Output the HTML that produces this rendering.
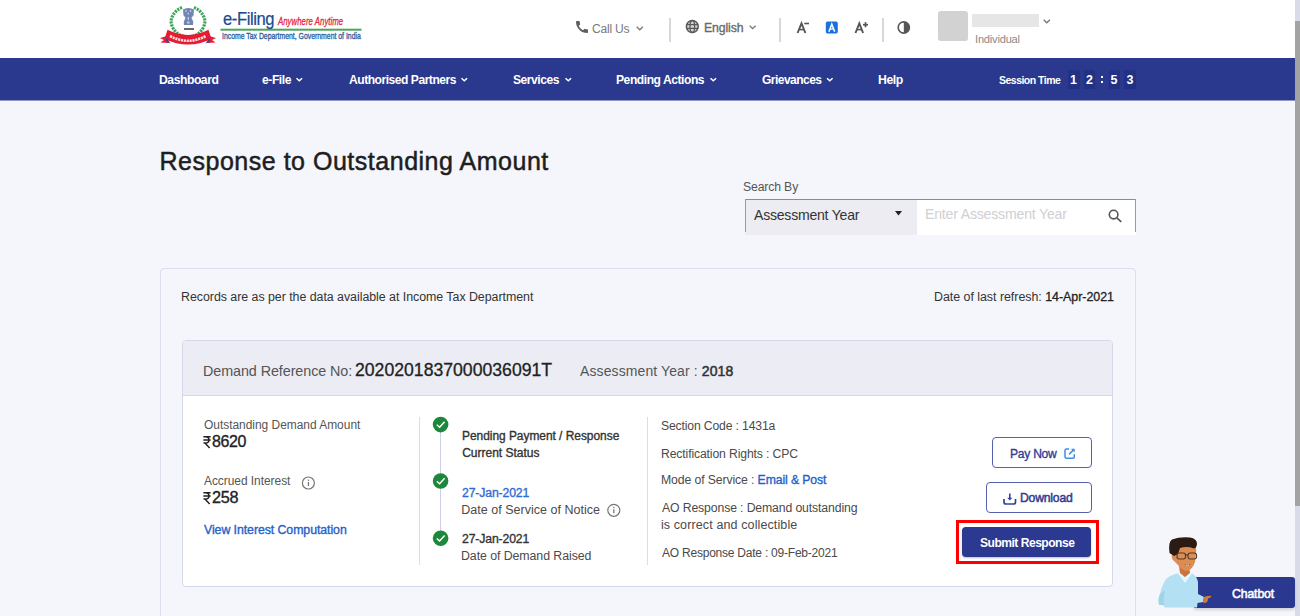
<!DOCTYPE html>
<html><head><meta charset="utf-8">
<style>
html,body{margin:0;padding:0;}
body{width:1300px;height:616px;overflow:hidden;position:relative;background:#f5f6fb;font-family:"Liberation Sans",sans-serif;}
.a{position:absolute;box-sizing:border-box;}
.t{position:absolute;white-space:nowrap;line-height:1;font-family:"Liberation Sans",sans-serif;}
svg{position:absolute;overflow:visible;}
</style></head><body>
<!-- header -->
<div class="a" style="left:0;top:0;width:1295px;height:58px;background:#fff;"></div>
<!-- navbar -->
<div class="a" style="left:0;top:58px;width:1295px;height:42px;background:#2a398d;"></div>
<div class="a" style="left:0;top:100px;width:1295px;height:1px;background:#8f97c4;"></div>
<!-- scrollbar -->
<div class="a" style="left:1295px;top:0;width:5px;height:616px;background:#dadbe9;"></div>
<div class="a" style="left:1295px;top:21px;width:5px;height:485px;background:#a3a3a3;"></div>

<!-- logo emblem -->
<svg style="left:0;top:0" width="1" height="1">
 <g fill="none" stroke="#3da35a" stroke-width="3.2" stroke-dasharray="2.2 0.9">
  <path d="M182 7.5 A17 17 0 0 0 171 21 A17 17 0 0 0 188 37"/>
  <path d="M194 7.5 A17 17 0 0 1 205 21 A17 17 0 0 1 188 37"/>
 </g>
 <g fill="#7185b3">
  <path d="M183 9.5 Q188 6.5 194 9.5 L193.5 15.5 Q191.5 17 191.5 18 L192.5 20 Q194 22 193 25 L184 25 Q183 22 184.5 20 L185.5 18 Q185.5 17 183.5 15.5 Z"/>
 </g>
 <g fill="#fff" opacity="0.55">
  <circle cx="186" cy="11" r="0.9"/><circle cx="190.5" cy="11" r="0.9"/><circle cx="188.3" cy="13.5" r="0.9"/>
  <rect x="187.6" y="17" width="1.4" height="3"/>
  <circle cx="188.3" cy="22.5" r="1.3"/>
 </g>
 <rect x="184" y="28" width="10" height="2" fill="#444" opacity="0.8"/>
 <path d="M167.5 29.8 Q188 40 208.5 29.8 L211.5 39 Q188 50 164.5 39 Z" fill="#e51d33"/>
 <path d="M167 36 L160 38 L164 40 L160.5 42.5 L169 43 Z" fill="#e51d33"/>
 <path d="M209 36 L216 38 L212 40 L215.5 42.5 L207 43 Z" fill="#e51d33"/>
 <path d="M166 37.5 L170.5 43.5 L166.5 42 Z" fill="#2c4a9a"/>
 <path d="M210 37.5 L205.5 43.5 L209.5 42 Z" fill="#2c4a9a"/>
 <path d="M170 36 Q188 45.5 206 36" fill="none" stroke="#fff" stroke-width="2.6" stroke-dasharray="2.2 0.7" opacity="0.85"/>
 <rect x="220.5" y="28.7" width="141" height="2" fill="#4da45a"/>
</svg>

<!-- call us -->
<svg style="left:573.5px;top:19px" width="16" height="16" viewBox="0 0 24 24"><path fill="#5e5e5e" d="M20.01 15.38c-1.23 0-2.42-.2-3.53-.56-.35-.12-.74-.03-1.01.24l-1.57 1.97c-2.83-1.35-5.48-3.9-6.89-6.83l1.95-1.66c.27-.28.35-.67.24-1.02-.37-1.11-.56-2.3-.56-3.53 0-.54-.45-.99-.99-.99H4.19C3.65 3 3 3.24 3 3.99 3 13.28 10.73 21 20.01 21c.71 0 .99-.63.99-1.18v-3.45c0-.54-.45-.99-.99-.99z"/></svg>
<svg style="left:636px;top:26px" width="8" height="5"><polyline points="0.7,0.7 3.8,3.8 6.9,0.7" fill="none" stroke="#777" stroke-width="1.3"/></svg>
<div class="a" style="left:669px;top:18px;width:2px;height:24px;background:#d7d7d7;"></div>
<!-- globe -->
<svg style="left:0;top:0" width="1" height="1">
 <g fill="none" stroke="#5a5a5a">
  <circle cx="692.3" cy="26.5" r="5.9" stroke-width="1.5"/>
  <ellipse cx="692.3" cy="26.5" rx="2.3" ry="6" stroke-width="1.3"/>
  <line x1="686.5" y1="24.6" x2="698.1" y2="24.6" stroke-width="1.3"/>
  <line x1="686.5" y1="28.4" x2="698.1" y2="28.4" stroke-width="1.3"/>
 </g>
 <circle cx="692.3" cy="26.5" r="6.6" fill="#5a5a5a" opacity="0.25"/>
</svg>
<svg style="left:749px;top:24.5px" width="8" height="5"><polyline points="0.7,0.7 3.6,3.6 6.6,0.7" fill="none" stroke="#777" stroke-width="1.3"/></svg>
<div class="a" style="left:779px;top:18px;width:2px;height:24px;background:#d7d7d7;"></div>
<!-- A- A A+ -->
<svg style="left:0;top:0" width="1" height="1">
 <g fill="none" stroke="#555" stroke-width="1.9" stroke-linejoin="miter">
  <path d="M797.6 33 L801.5 23.3 L805.4 33"/>
  <line x1="799.2" y1="29.6" x2="803.8" y2="29.6" stroke-width="1.5"/>
  <line x1="804.3" y1="23.5" x2="809" y2="23.5" stroke-width="1.6"/>
  <path d="M855.5 33 L859.3 23.3 L863.1 33"/>
  <line x1="857" y1="29.6" x2="861.6" y2="29.6" stroke-width="1.5"/>
  <line x1="863" y1="24.7" x2="868" y2="24.7" stroke-width="1.7"/>
  <line x1="865.5" y1="22.2" x2="865.5" y2="27.2" stroke-width="1.7"/>
 </g>
 <rect x="825.8" y="21.6" width="12" height="12" rx="1.8" fill="#1a70de"/>
 <g fill="none" stroke="#fff" stroke-width="1.5">
  <path d="M828.9 31.8 L831.8 24.2 L834.7 31.8"/>
  <line x1="830" y1="29" x2="833.6" y2="29" stroke-width="1.2"/>
 </g>
</svg>
<div class="a" style="left:882px;top:18px;width:2px;height:24px;background:#d7d7d7;"></div>
<svg style="left:897px;top:21px" width="14" height="14" viewBox="0 0 14 14">
 <circle cx="6.8" cy="6.5" r="5.6" fill="none" stroke="#555" stroke-width="1.6"/>
 <path d="M6.8 0.9 A5.6 5.6 0 0 1 6.8 12.1 Z" fill="#555"/>
</svg>
<div class="a" style="left:937.5px;top:11.2px;width:30.3px;height:30.3px;background:#d2d2d2;border-radius:3px;"></div>
<div class="a" style="left:972.2px;top:14px;width:67px;height:12.5px;background:#e6e6e6;"></div>
<svg style="left:1043px;top:18.5px" width="8" height="5"><polyline points="0.7,0.7 3.8,3.8 6.9,0.7" fill="none" stroke="#777" stroke-width="1.3"/></svg>

<!-- nav chevrons -->
<svg style="left:0;top:0" width="1" height="1">
 <g fill="none" stroke="#fff" stroke-width="1.5">
  <polyline points="296.5,78.2 299.3,80.8 302.1,78.2"/>
  <polyline points="461.5,78.2 464.3,80.8 467.1,78.2"/>
  <polyline points="565.5,78.2 568.3,80.8 571.1,78.2"/>
  <polyline points="710.5,78.2 713.3,80.8 716.1,78.2"/>
  <polyline points="827,78.2 829.8,80.8 832.6,78.2"/>
 </g>
</svg>
<!-- session timer boxes -->
<div class="a" style="left:1067.8px;top:69.6px;width:12px;height:19.2px;background:#233184;"></div>
<div class="a" style="left:1084.2px;top:69.6px;width:11px;height:19.2px;background:#233184;"></div>
<div class="a" style="left:1108.8px;top:69.6px;width:11px;height:19.2px;background:#233184;"></div>
<div class="a" style="left:1124.2px;top:69.6px;width:12.3px;height:19.2px;background:#233184;"></div>
<div class="t" style="left:1070px;top:73.5px;font-size:12.5px;font-weight:bold;color:#fff;">1</div>
<div class="t" style="left:1086px;top:73.5px;font-size:12.5px;font-weight:bold;color:#fff;">2</div>
<div class="a" style="left:1100.8px;top:75.5px;width:2.2px;height:2.2px;background:#fff;"></div>
<div class="a" style="left:1100.8px;top:81.3px;width:2.2px;height:2.2px;background:#fff;"></div>
<div class="t" style="left:1110.5px;top:73.5px;font-size:12.5px;font-weight:bold;color:#fff;">5</div>
<div class="t" style="left:1126.5px;top:73.5px;font-size:12.5px;font-weight:bold;color:#fff;">3</div>

<!-- search box -->
<div class="a" style="left:745px;top:199px;width:172px;height:36px;background:#ececf2;"></div>
<div class="a" style="left:917px;top:199px;width:219px;height:36px;background:#fff;"></div>
<div class="a" style="left:745px;top:199px;width:391px;height:1px;background:#8c8c8c;"></div>
<div class="a" style="left:745px;top:199px;width:1px;height:33px;background:#9a9a9a;"></div>
<div class="a" style="left:1135px;top:199px;width:1px;height:33px;background:#9a9a9a;"></div>
<svg style="left:894.5px;top:211px" width="7" height="5"><path d="M0 0 L7 0 L3.5 4.5 Z" fill="#222"/></svg>
<svg style="left:1108px;top:209px" width="15" height="14" viewBox="0 0 15 14">
 <circle cx="5.6" cy="5.6" r="4.3" fill="none" stroke="#555" stroke-width="1.6"/>
 <line x1="8.8" y1="8.8" x2="13.3" y2="12.8" stroke="#555" stroke-width="1.7"/>
</svg>

<!-- outer card -->
<div class="a" style="left:160px;top:268px;width:976px;height:400px;border:1px solid #dcdded;border-radius:4px;background:#f5f6fb;"></div>
<!-- demand box -->
<div class="a" style="left:182px;top:340px;width:931px;height:247px;border:1px solid #d6d7ea;border-radius:4px;background:#fff;overflow:hidden;">
  <div class="a" style="left:0;top:0;width:100%;height:55px;background:#ebecf4;border-bottom:1px solid #d6d7ea;"></div>
</div>
<!-- dividers -->
<div class="a" style="left:419px;top:417px;width:1px;height:148px;background:#dcdcee;"></div>
<div class="a" style="left:647px;top:417px;width:1px;height:148px;background:#dcdcee;"></div>
<!-- timeline -->
<div class="a" style="left:440px;top:430px;width:1px;height:104px;background:#cfcfea;"></div>
<svg style="left:0;top:0" width="1" height="1">
 <g>
  <circle cx="440.6" cy="424.6" r="7.8" fill="#1d873a"/>
  <polyline points="436.8,424.8 439.6,427.3 444.6,421.8" fill="none" stroke="#fff" stroke-width="1.5"/>
  <circle cx="440.6" cy="481" r="7.8" fill="#1d873a"/>
  <polyline points="436.8,481.2 439.6,483.7 444.6,478.2" fill="none" stroke="#fff" stroke-width="1.5"/>
  <circle cx="440.6" cy="538.3" r="7.8" fill="#1d873a"/>
  <polyline points="436.8,538.5 439.6,541 444.6,535.5" fill="none" stroke="#fff" stroke-width="1.5"/>
 </g>
 <g fill="none" stroke="#777" stroke-width="1.2">
  <circle cx="308.4" cy="483" r="6"/>
  <circle cx="613.8" cy="510.3" r="6"/>
 </g>
 <g fill="#777">
  <rect x="307.8" y="482" width="1.3" height="4"/>
  <rect x="307.8" y="479.6" width="1.3" height="1.3"/>
  <rect x="613.2" y="509.3" width="1.3" height="4"/>
  <rect x="613.2" y="506.9" width="1.3" height="1.3"/>
 </g>
</svg>
<!-- buttons -->
<div class="a" style="left:992.4px;top:437.3px;width:99.4px;height:31px;border:1.3px solid #5561aa;border-radius:4px;"></div>
<svg style="left:1064px;top:447.5px" width="12" height="11" viewBox="0 0 12 11">
 <path d="M5 1 H2.5 Q1 1 1 2.5 V8.8 Q1 10.3 2.5 10.3 H8.8 Q10.3 10.3 10.3 8.8 V6.3" fill="none" stroke="#3e8fe6" stroke-width="1.5"/>
 <path d="M7 0.8 H10.6 V4.4 Z" fill="#3e8fe6"/>
 <path d="M10 1.4 L5 6.4" fill="none" stroke="#3e8fe6" stroke-width="1.5"/>
</svg>
<div class="a" style="left:986.1px;top:482.3px;width:105.7px;height:30.7px;border:1.3px solid #5561aa;border-radius:4px;"></div>
<svg style="left:1002.5px;top:493px" width="14" height="12" viewBox="0 0 14 12">
 <path d="M1 6 V9 Q1 11 3 11 H10.5 Q12.5 11 12.5 9 V6" fill="none" stroke="#34429a" stroke-width="1.7"/>
 <path d="M6.8 0.5 V6" fill="none" stroke="#34429a" stroke-width="1.6"/>
 <path d="M4.2 4.8 L9.4 4.8 L6.8 7.6 Z" fill="#34429a"/>
</svg>
<div class="a" style="left:955.5px;top:519.8px;width:143.7px;height:44.7px;border:3px solid #ff0000;"></div>
<div class="a" style="left:961.8px;top:526.6px;width:129.7px;height:30.3px;background:#2b3990;border-radius:4px;box-shadow:0 1px 2px rgba(0,0,0,0.25);"></div>

<!-- chatbot -->
<div class="a" style="left:1194px;top:577px;width:101px;height:30.5px;background:#2a398f;border-radius:0 3px 3px 0;box-shadow:0 2px 3px rgba(0,0,0,0.15);"></div>
<svg style="left:0;top:0" width="1" height="1">
 <!-- body / shirt -->
 <path d="M1166 579 Q1172 574 1178 573.5 L1192 573.5 Q1197 576 1198 582 L1198 594 L1204 597 L1203 602 L1197.5 603 L1197 607.5 L1165 607.5 L1163 605 L1159 605 Q1157 600 1160 594 Q1162 585 1166 579 Z" fill="#b3e0f2"/>
 <path d="M1160 594 Q1158 600 1159.5 605 L1164 605 Q1163 598 1165 590 Z" fill="#9fd3ea"/>
 <path d="M1178 573.5 L1185 583 L1192 573.5 L1190 572 L1185 577 L1180 572 Z" fill="#e3f6fd"/>
 <path d="M1203.5 597.5 Q1206 595.5 1208 596 L1211.5 595.8 L1210.5 597.5 L1208 598.5 Q1208 602 1205.5 603 L1203 602.5 Z" fill="#cf7a3a"/>
 <!-- neck -->
 <path d="M1179 566 L1189 566 L1190 573 L1185 577 L1180 573 Z" fill="#c97340"/>
 <!-- face -->
 <path d="M1172 550 Q1171 545 1176 543 L1193 543 Q1197 546 1196 553 L1195 562 Q1193 569 1187 571 Q1181 570 1178 565 L1174 561 Q1171 559 1172 553 Z" fill="#dd8c52"/>
 <!-- hair -->
 <path d="M1169.5 553 Q1168 542 1172 539.5 Q1180 536.5 1190 537.5 Q1197 538.5 1197 544 Q1196.5 548 1194 548.5 Q1187 546 1180 548 L1178 554 L1174 556 Z" fill="#2c1b12"/>
 <!-- glasses -->
 <g fill="none" stroke="#4a3a33" stroke-width="1.1">
  <rect x="1177" y="553" width="8.5" height="6" rx="2.2"/>
  <rect x="1188" y="553" width="8.5" height="6" rx="2.2"/>
  <line x1="1185.5" y1="555" x2="1188" y2="555"/>
 </g>
 <path d="M1184.5 564.5 Q1187.3 567.5 1190 564.5 Z" fill="#3a2016"/>
 <rect x="1185.5" y="564.6" width="3.5" height="1" fill="#fff"/>
</svg>

<!-- rupee symbols -->
<svg style="left:203px;top:436px" width="8" height="12" viewBox="0 0 7.3 12">
 <path d="M0 0.7 H7.3 M0 3.9 H7.3 M0.2 6.9 H2.2 C4.6 6.9 5.6 5.5 5.6 3.9 C5.6 2.2 4.6 0.7 2.2 0.7 M1.6 7 L6.3 11.9" fill="none" stroke="#222" stroke-width="1.45"/>
</svg>
<svg style="left:203px;top:492px" width="8" height="12" viewBox="0 0 7.3 12">
 <path d="M0 0.7 H7.3 M0 3.9 H7.3 M0.2 6.9 H2.2 C4.6 6.9 5.6 5.5 5.6 3.9 C5.6 2.2 4.6 0.7 2.2 0.7 M1.6 7 L6.3 11.9" fill="none" stroke="#222" stroke-width="1.45"/>
</svg>

<div class="t" style="left:222.80px;top:10.50px;font-size:17.5px;letter-spacing:-0.425px;transform:scaleX(0.9478);transform-origin:0 0;color:#1a4a8f;-webkit-text-stroke:0.2px #1a4a8f;">e-Filing</div>
<div class="t" style="left:277.71px;top:15.80px;font-size:11px;letter-spacing:0.000px;transform:scaleX(0.7140);transform-origin:0 0;color:#e3283f;font-style:italic;-webkit-text-stroke:0.3px #e3283f;">Anywhere Anytime</div>
<div class="t" style="left:221.50px;top:31.10px;font-size:9.5px;letter-spacing:0.000px;transform:scaleX(0.7228);transform-origin:0 0;color:#2b5f9c;-webkit-text-stroke:0.35px #2b5f9c;">Income Tax Department, Government of India</div>
<div class="t" style="left:592.00px;top:23.30px;font-size:12.5px;letter-spacing:-0.238px;transform:scaleX(0.9644);transform-origin:0 0;color:#7a7a7a;">Call Us</div>
<div class="t" style="left:704.42px;top:22.40px;font-size:12.5px;letter-spacing:-0.126px;transform:scaleX(0.9811);transform-origin:0 0;color:#6a6a6a;-webkit-text-stroke:0.35px currentColor;">English</div>
<div class="t" style="left:975.04px;top:33.50px;font-size:11.5px;letter-spacing:-0.198px;transform:scaleX(0.9620);transform-origin:0 0;color:#8a8a8a;">Individual</div>
<div class="t" style="left:158.56px;top:73.00px;font-size:13px;letter-spacing:-0.509px;transform:scaleX(0.9382);transform-origin:0 0;color:#fff;font-weight:bold;">Dashboard</div>
<div class="t" style="left:261.50px;top:73.00px;font-size:13px;letter-spacing:-0.466px;transform:scaleX(0.9315);transform-origin:0 0;color:#fff;font-weight:bold;">e-File</div>
<div class="t" style="left:348.50px;top:73.00px;font-size:13px;letter-spacing:-0.504px;transform:scaleX(0.9274);transform-origin:0 0;color:#fff;font-weight:bold;">Authorised Partners</div>
<div class="t" style="left:513.30px;top:73.00px;font-size:13px;letter-spacing:-0.518px;transform:scaleX(0.9316);transform-origin:0 0;color:#fff;font-weight:bold;">Services</div>
<div class="t" style="left:615.87px;top:73.00px;font-size:13px;letter-spacing:-0.496px;transform:scaleX(0.9313);transform-origin:0 0;color:#fff;font-weight:bold;">Pending Actions</div>
<div class="t" style="left:761.80px;top:73.00px;font-size:13px;letter-spacing:-0.583px;transform:scaleX(0.9250);transform-origin:0 0;color:#fff;font-weight:bold;">Grievances</div>
<div class="t" style="left:878.26px;top:73.00px;font-size:13px;letter-spacing:-0.497px;transform:scaleX(0.9448);transform-origin:0 0;color:#fff;font-weight:bold;">Help</div>
<div class="t" style="left:999.20px;top:74.90px;font-size:11.5px;letter-spacing:-0.575px;transform:scaleX(0.9146);transform-origin:0 0;color:#fff;font-weight:bold;">Session Time</div>
<div class="t" style="left:159.50px;top:149.00px;font-size:25px;letter-spacing:0.514px;color:#1e1e1e;-webkit-text-stroke:0.5px #1e1e1e;">Response to Outstanding Amount</div>
<div class="t" style="left:743.22px;top:180.70px;font-size:12.5px;letter-spacing:-0.152px;transform:scaleX(0.9787);transform-origin:0 0;color:#555;">Search By</div>
<div class="t" style="left:754.20px;top:207.60px;font-size:14.5px;letter-spacing:-0.239px;transform:scaleX(0.9701);transform-origin:0 0;color:#333;">Assessment Year</div>
<div class="t" style="left:925.03px;top:207.20px;font-size:14.5px;letter-spacing:-0.203px;transform:scaleX(0.9728);transform-origin:0 0;color:#cfcfd4;">Enter Assessment Year</div>
<div class="t" style="left:180.71px;top:290.60px;font-size:12.5px;letter-spacing:-0.043px;transform:scaleX(0.9927);transform-origin:0 0;color:#333;">Records are as per the data available at Income Tax Department</div>
<div class="t" style="left:933.71px;top:291.00px;font-size:12.5px;letter-spacing:-0.033px;transform:scaleX(0.9942);transform-origin:0 0;color:#333;">Date of last refresh: <span style="color:#222;-webkit-text-stroke:0.3px #222;">14-Apr-2021</span></div>
<div class="t" style="left:202.51px;top:363.70px;font-size:14.5px;letter-spacing:-0.082px;transform:scaleX(0.9896);transform-origin:0 0;color:#555;">Demand Reference No:</div>
<div class="t" style="left:354.80px;top:361.20px;font-size:18px;letter-spacing:0.000px;transform:scaleX(0.9796);transform-origin:0 0;color:#222;-webkit-text-stroke:0.3px #222;">2020201837000036091T</div>
<div class="t" style="left:580.00px;top:364.20px;font-size:14px;letter-spacing:0.105px;color:#555;">Assessment Year : <span style="color:#333;-webkit-text-stroke:0.5px #333;">2018</span></div>
<div class="t" style="left:203.60px;top:419.40px;font-size:12px;letter-spacing:-0.023px;transform:scaleX(0.9965);transform-origin:0 0;color:#555;">Outstanding Demand Amount</div>
<div class="t" style="left:212.10px;top:432.90px;font-size:16.5px;letter-spacing:-0.389px;transform:scaleX(0.9684);transform-origin:0 0;color:#222;-webkit-text-stroke:0.35px currentColor;">8620</div>
<div class="t" style="left:203.60px;top:474.80px;font-size:12px;letter-spacing:-0.033px;transform:scaleX(0.9943);transform-origin:0 0;color:#555;">Accrued Interest</div>
<div class="t" style="left:212.10px;top:488.80px;font-size:16.5px;letter-spacing:-0.227px;transform:scaleX(0.9832);transform-origin:0 0;color:#222;-webkit-text-stroke:0.35px currentColor;">258</div>
<div class="t" style="left:203.60px;top:524.30px;font-size:12.5px;letter-spacing:-0.075px;transform:scaleX(0.9876);transform-origin:0 0;color:#2461c9;-webkit-text-stroke:0.35px currentColor;">View Interest Computation</div>
<div class="t" style="left:462.20px;top:429.70px;font-size:12px;letter-spacing:-0.030px;transform:scaleX(0.9953);transform-origin:0 0;color:#333;-webkit-text-stroke:0.35px currentColor;">Pending Payment / Response</div>
<div class="t" style="left:462.20px;top:446.70px;font-size:12px;letter-spacing:-0.004px;color:#333;-webkit-text-stroke:0.35px currentColor;">Current Status</div>
<div class="t" style="left:462.20px;top:486.50px;font-size:12.5px;letter-spacing:-0.147px;transform:scaleX(0.9791);transform-origin:0 0;color:#2f6bd6;-webkit-text-stroke:0.35px currentColor;">27-Jan-2021</div>
<div class="t" style="left:461.20px;top:503.60px;font-size:12.5px;letter-spacing:0.021px;color:#4a4a4a;">Date of Service of Notice</div>
<div class="t" style="left:462.20px;top:533.40px;font-size:12.5px;letter-spacing:-0.147px;transform:scaleX(0.9791);transform-origin:0 0;color:#333;-webkit-text-stroke:0.35px currentColor;">27-Jan-2021</div>
<div class="t" style="left:461.21px;top:549.60px;font-size:12.5px;letter-spacing:-0.075px;transform:scaleX(0.9886);transform-origin:0 0;color:#4a4a4a;">Date of Demand Raised</div>
<div class="t" style="left:660.93px;top:420.10px;font-size:12.5px;letter-spacing:-0.157px;transform:scaleX(0.9749);transform-origin:0 0;color:#4a4a4a;">Section Code : 1431a</div>
<div class="t" style="left:660.92px;top:447.60px;font-size:12.5px;letter-spacing:-0.136px;transform:scaleX(0.9761);transform-origin:0 0;color:#4a4a4a;">Rectification Rights : CPC</div>
<div class="t" style="left:660.92px;top:474.10px;font-size:12.5px;letter-spacing:-0.120px;transform:scaleX(0.9797);transform-origin:0 0;color:#4a4a4a;">Mode of Service : <span style="color:#2461c9;-webkit-text-stroke:0.35px currentColor;">Email &amp; Post</span></div>
<div class="t" style="left:661.90px;top:501.90px;font-size:12.5px;letter-spacing:-0.132px;transform:scaleX(0.9798);transform-origin:0 0;color:#4a4a4a;">AO Response : Demand outstanding</div>
<div class="t" style="left:660.90px;top:518.50px;font-size:12.5px;letter-spacing:0.120px;color:#4a4a4a;">is correct and collectible</div>
<div class="t" style="left:661.90px;top:546.90px;font-size:12.5px;letter-spacing:-0.248px;transform:scaleX(0.9622);transform-origin:0 0;color:#4a4a4a;">AO Response Date : 09-Feb-2021</div>
<div class="t" style="left:1010.43px;top:447.50px;font-size:12.5px;letter-spacing:-0.271px;transform:scaleX(0.9675);transform-origin:0 0;color:#2f3d94;-webkit-text-stroke:0.35px currentColor;">Pay Now</div>
<div class="t" style="left:1020.30px;top:491.80px;font-size:12.5px;letter-spacing:-0.203px;transform:scaleX(0.9747);transform-origin:0 0;color:#2f3d94;-webkit-text-stroke:0.5px currentColor;">Download</div>
<div class="t" style="left:979.80px;top:536.00px;font-size:13px;letter-spacing:-0.551px;transform:scaleX(0.9298);transform-origin:0 0;color:#fff;font-weight:bold;">Submit Response</div>
<div class="t" style="left:1231.90px;top:588.00px;font-size:12.5px;letter-spacing:-0.135px;transform:scaleX(0.9816);transform-origin:0 0;color:#fff;-webkit-text-stroke:0.55px #fff;">Chatbot</div>
</body></html>
